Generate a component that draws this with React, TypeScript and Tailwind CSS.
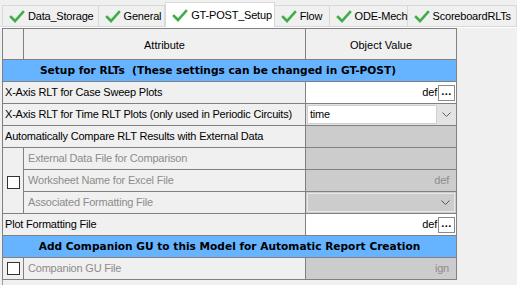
import React from 'react';

const FONT = { fontFamily: '"Liberation Sans", Arial, sans-serif' };
const BOLD = { fontFamily: '"DejaVu Sans", Verdana, sans-serif' };

function Check() {
  return (
    <svg width="16" height="13" viewBox="0 0 16 13" className="shrink-0">
      <path d="M2 7 L6 11 L14 2" fill="none" stroke="#3fae49" strokeWidth="2.6" strokeLinecap="square" />
    </svg>
  );
}

function Tab({ label, active, w }: { label: string; active?: boolean; w: string }) {
  return (
    <div
      className={
        active
          ? `${w} h-[25px] -mb-px bg-white border border-b-0 border-[#d9d9d9] flex items-center gap-[3px] pl-[6px] z-10`
          : `${w} h-[21px] bg-[#f0f0f0] border border-b-0 border-l-0 first:border-l border-[#d9d9d9] flex items-center gap-[3px] pl-[6px]`
      }
    >
      <Check />
      <span className="text-[11px] text-black tracking-[-0.2px] whitespace-nowrap">{label}</span>
    </div>
  );
}

function Chevron({ color = '#606060' }: { color?: string }) {
  return (
    <svg width="9" height="5" viewBox="0 0 9 5">
      <path d="M0.5 0.5 L4.5 4.5 L8.5 0.5" fill="none" stroke={color} strokeWidth="1" />
    </svg>
  );
}

function DotsButton() {
  return (
    <div className="w-[17px] h-[16px] border border-[#8a8a8a] bg-white flex items-end justify-center pb-[3px] ml-[1px]">
      <span className="text-[11px] font-bold leading-none tracking-[0.5px]">...</span>
    </div>
  );
}

const cellBase = 'h-[21px] flex items-center text-[11px] tracking-[-0.2px] whitespace-nowrap';

export default function App() {
  return (
    <div className="w-[517px] h-[285px] bg-[#f0f0f0] overflow-hidden relative" style={FONT}>
      {/* tab strip */}
      <div className="h-[26px] flex items-end pl-[2px] bg-[#f0f0f0]">
        <Tab label="Data_Storage" w="w-[97px]" />
        <Tab label="General" w="w-[67px]" />
        <Tab label="GT-POST_Setup" active w="w-[110px]" />
        <Tab label="Flow" w="w-[55px]" />
        <Tab label="ODE-Mech" w="w-[78px]" />
        <Tab label="ScoreboardRLTs" w="w-[110px]" />
      </div>
      <div className="h-[2px] bg-white border-t border-[#d9d9d9]" />

      <div className="flex">
        <div className="w-[2px]" />
        <div className="grid grid-cols-[20px_281px_150px] gap-px bg-[#808080] border border-[#808080] w-[455px]">
          {/* header */}
          <div className="h-[30px] bg-[#f0f0f0]" />
          <div className="h-[30px] bg-[#f0f0f0] flex items-center justify-center text-[11px] pt-[2px]">Attribute</div>
          <div className="h-[30px] bg-[#f0f0f0] flex items-center justify-center text-[11px] pt-[2px]">Object Value</div>

          {/* section 1 */}
          <div
            className="col-span-3 h-[21px] bg-[#66b3ff] flex items-center justify-center pr-[23px] text-[10.6px] font-bold text-black whitespace-pre"
            style={BOLD}
          >
            Setup for RLTs  (These settings can be changed in GT-POST)
          </div>

          <div className={`${cellBase} col-span-2 bg-[#f0f0f0] pl-[2px]`}>X-Axis RLT for Case Sweep Plots</div>
          <div className={`${cellBase} bg-white justify-end pr-[1px]`}>
            <span>def</span>
            <DotsButton />
          </div>

          <div className={`${cellBase} col-span-2 bg-[#f0f0f0] pl-[2px]`}>X-Axis RLT for Time RLT Plots (only used in Periodic Circuits)</div>
          <div className="h-[21px] bg-[#e3e3e3] p-[1px] flex">
            <div className="flex-1 bg-white border border-[#d0d0d0] flex items-center pl-[2px] text-[11px] tracking-[-0.2px]">time</div>
            <div className="w-[18px] flex items-center justify-center">
              <Chevron />
            </div>
          </div>

          <div className={`${cellBase} col-span-2 bg-[#f0f0f0] pl-[2px]`}>Automatically Compare RLT Results with External Data</div>
          <div className="h-[21px] bg-[#cccccc]" />

          {/* merged checkbox block */}
          <div className="row-span-3 bg-[#f0f0f0] flex items-center justify-center pt-[3px]">
            <div className="w-[13px] h-[13px] border border-[#333333] bg-white" />
          </div>
          <div className={`${cellBase} bg-[#f0f0f0] pl-[4px] text-[#8c8c8c]`}>External Data File for Comparison</div>
          <div className="h-[21px] bg-[#cccccc]" />
          <div className={`${cellBase} bg-[#f0f0f0] pl-[4px] text-[#8c8c8c]`}>Worksheet Name for Excel File</div>
          <div className={`${cellBase} bg-[#cccccc] justify-end pr-[7px] text-[#8c8c8c]`}>def</div>
          <div className={`${cellBase} bg-[#f0f0f0] pl-[4px] text-[#8c8c8c]`}>Associated Formatting File</div>
          <div className="h-[21px] bg-[#cccccc] p-[1px]">
            <div className="h-full border border-[#e8e8e8] flex">
              <div className="flex-1 bg-[#cccccc]" />
              <div className="w-[18px] flex items-center justify-center">
                <Chevron color="#555555" />
              </div>
            </div>
          </div>

          <div className={`${cellBase} col-span-2 bg-[#f0f0f0] pl-[2px]`}>Plot Formatting File</div>
          <div className={`${cellBase} bg-white justify-end pr-[1px]`}>
            <span>def</span>
            <DotsButton />
          </div>

          {/* section 2 */}
          <div
            className="col-span-3 h-[21px] bg-[#66b3ff] flex items-center justify-center text-[10.6px] font-bold text-black whitespace-nowrap"
            style={BOLD}
          >
            Add Companion GU to this Model for Automatic Report Creation
          </div>

          <div className="h-[21px] bg-[#f0f0f0] flex items-center justify-center">
            <div className="w-[13px] h-[13px] border border-[#333333] bg-white" />
          </div>
          <div className={`${cellBase} bg-[#f0f0f0] pl-[4px] text-[#8c8c8c]`}>Companion GU File</div>
          <div className={`${cellBase} bg-[#cccccc] justify-end pr-[7px] text-[#8c8c8c]`}>ign</div>
        </div>
      </div>
      <div className="absolute left-[2px] top-[280px] w-px h-[10px] bg-[#a0a0a0]" />
    </div>
  );
}
